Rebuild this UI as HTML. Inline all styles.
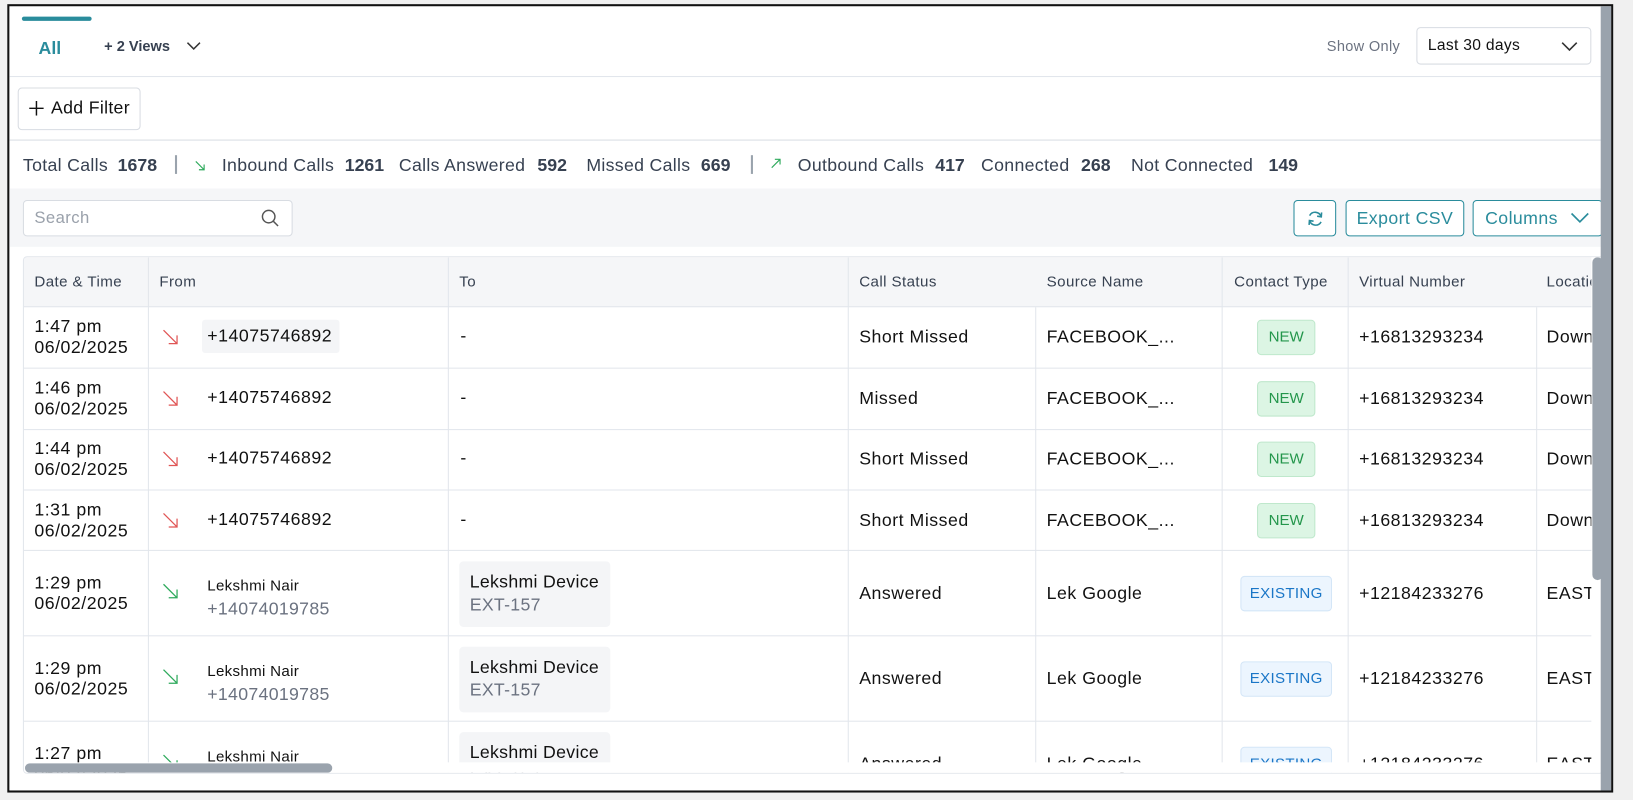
<!DOCTYPE html>
<html><head><meta charset="utf-8"><style>
*{box-sizing:border-box;margin:0;padding:0}
body{width:1633px;height:800px;background:#f0f0f0;font-family:"Liberation Sans",sans-serif;color:#111;position:relative;overflow:hidden}
#wrap{position:absolute;left:0;top:0;width:1568px;height:768px;transform:scale(1.04145);transform-origin:0 0}
.a{position:absolute;white-space:nowrap}
#frame{position:absolute;left:7px;top:4px;width:1542px;height:757px;border:2px solid #111;background:#fff;overflow:hidden}
.f16{font-size:17px;letter-spacing:0.5px}
.gray{color:#374151}
.b{font-weight:bold;color:#374151}
.btn{position:absolute;border:1px solid #2a8c9c;border-radius:4px;color:#2a8c9c;font-size:17px;letter-spacing:0.4px;display:flex;align-items:center;justify-content:center;background:#fff}
.hd{font-size:14.5px;color:#374151;letter-spacing:0.4px}
.vl{position:absolute;width:1px;background:#e2e6ec}
.hl{position:absolute;height:1px;background:#e2e6ec}
.new{position:absolute;width:56px;height:34px;border:1px solid #bfe8cc;background:#dcf5e4;color:#23964b;border-radius:4px;font-size:14.5px;display:flex;align-items:center;justify-content:center}
.ex{position:absolute;width:88px;height:34px;border:1px solid #d4e6f7;background:#ecf5fe;color:#1a76c7;border-radius:4px;font-size:14.5px;letter-spacing:0.3px;display:flex;align-items:center;justify-content:center}
.dev{position:absolute;width:145px;height:63px;background:#f4f5f7;border-radius:4px;padding:9px 10px;font-size:17px;line-height:22px;letter-spacing:0.3px}
.st{position:absolute;top:143px;font-size:17px;color:#374151;white-space:nowrap;letter-spacing:0.3px}
.sb{position:absolute;top:143px;font-size:17px;font-weight:bold;color:#374151;white-space:nowrap}
</style></head><body>
<div id="wrap">
<div id="frame">
<div style="position:absolute;left:12px;top:10px;width:67px;height:4px;background:#2a8c9c;border-radius:3px"></div>
<div class="a" style="left:28px;top:31px;font-size:17px;font-weight:bold;color:#2a8c9c">All</div>
<div class="a" style="left:91px;top:30px;font-size:14px;font-weight:bold;color:#374151">+ 2 Views</div>
<svg class="a" style="left:170px;top:33px" width="14" height="10"><path d="M1 2 L7 8 L13 2" fill="none" stroke="#333" stroke-width="1.4"/></svg>
<div class="a" style="left:1265px;top:30px;font-size:14px;color:#6b7280;letter-spacing:0.3px">Show Only</div>
<div style="position:absolute;left:1351px;top:20px;width:168px;height:36px;border:1px solid #d8dce2;border-radius:4px"></div>
<div class="a" style="left:1362px;top:29px;font-size:15px;letter-spacing:0.3px">Last 30 days</div>
<svg class="a" style="left:1490px;top:34px" width="16" height="10"><path d="M1 1 L8 8 L15 1" fill="none" stroke="#333" stroke-width="1.5"/></svg>
<div class="hl" style="left:0;top:67px;width:1530px"></div>
<div style="position:absolute;left:8px;top:78px;width:118px;height:41px;border:1px solid #d8dce2;border-radius:4px"></div>
<svg class="a" style="left:19px;top:91px" width="14" height="14"><path d="M7 0 V14 M0 7 H14" stroke="#111" stroke-width="1.4"/></svg>
<div class="a" style="left:40px;top:88px;font-size:17px;letter-spacing:0.3px">Add Filter</div>
<div class="hl" style="left:0;top:128px;width:1530px;background:#d8dde4"></div>
<div class="st" style="left:13px">Total Calls</div><div class="sb" style="left:104px">1678</div>
<div style="position:absolute;left:159px;top:143px;width:2px;height:18px;background:#9aa3ad"></div>
<svg class="a" style="left:178px;top:148px" width="10" height="10"><path d="M1 1 L9 9 M4 9 H9 V4" fill="none" stroke="#2eaa5c" stroke-width="1.1"/></svg>
<div class="st" style="left:204px">Inbound Calls</div><div class="sb" style="left:322px">1261</div>
<div class="st" style="left:374px">Calls Answered</div><div class="sb" style="left:507px">592</div>
<div class="st" style="left:554px">Missed Calls</div><div class="sb" style="left:664px">669</div>
<div style="position:absolute;left:712px;top:143px;width:2px;height:18px;background:#9aa3ad"></div>
<svg class="a" style="left:731px;top:146px" width="10" height="10"><path d="M1 9 L9 1 M4 1 H9 V6" fill="none" stroke="#2eaa5c" stroke-width="1.1"/></svg>
<div class="st" style="left:757px">Outbound Calls</div><div class="sb" style="left:889px">417</div>
<div class="st" style="left:933px">Connected</div><div class="sb" style="left:1029px">268</div>
<div class="st" style="left:1077px">Not Connected</div><div class="sb" style="left:1209px">149</div>
<div style="position:absolute;left:0;top:175px;width:1530px;height:56px;background:#f5f6f8"></div>
<div style="position:absolute;left:13px;top:186px;width:259px;height:35px;border:1px solid #d8dce2;border-radius:4px;background:#fff"></div>
<div class="a" style="left:24px;top:195px;font-size:16px;color:#9aa1ab;letter-spacing:0.4px">Search</div>
<svg class="a" style="left:241px;top:194px" width="20" height="20"><circle cx="8" cy="8" r="6" fill="none" stroke="#555" stroke-width="1.4"/><path d="M12.5 12.5 L17 17" stroke="#555" stroke-width="1.4"/></svg>
<div class="btn" style="left:1233px;top:186px;width:41px;height:35px"><svg width="18" height="18" viewBox="0 0 18 18"><path d="M14.5 7 A6 6 0 0 0 3.5 6 M3.5 11 A6 6 0 0 0 14.5 12" fill="none" stroke="#2a8c9c" stroke-width="1.5"/><path d="M15 3 L14.7 7.2 L10.7 6.6 M3 15 L3.3 10.8 L7.3 11.4" fill="none" stroke="#2a8c9c" stroke-width="1.5"/></svg></div>
<div class="btn" style="left:1283px;top:186px;width:114px;height:35px">Export CSV</div>
<div class="btn" style="left:1405px;top:186px;width:125px;height:35px;justify-content:flex-start;padding-left:11px">Columns<svg style="margin-left:12px" width="18" height="11"><path d="M1 1 L9 9 L17 1" fill="none" stroke="#2a8c9c" stroke-width="1.6"/></svg></div>

<!-- table -->
<div style="position:absolute;left:13px;top:240px;width:1518px;height:497px;border:1px solid #e2e6ec;border-radius:4px;overflow:hidden">
<div style="position:absolute;left:0;top:0;width:1518px;height:507px;overflow:hidden">
<div style="position:absolute;left:0;top:0;width:1520px;height:48px;background:#f5f6f8;border-bottom:1px solid #e2e6ec"></div>
<div class="a hd" style="left:10px;top:16px">Date &amp; Time</div>
<div class="a hd" style="left:130px;top:16px">From</div>
<div class="a hd" style="left:418px;top:16px">To</div>
<div class="a hd" style="left:802px;top:16px">Call Status</div>
<div class="a hd" style="left:982px;top:16px">Source Name</div>
<div class="a hd" style="left:1162px;top:16px">Contact Type</div>
<div class="a hd" style="left:1282px;top:16px">Virtual Number</div>
<div class="a hd" style="left:1462px;top:16px">Location</div>
<div class="vl" style="left:119px;top:0;height:500px"></div>
<div class="vl" style="left:407px;top:0;height:500px"></div>
<div class="vl" style="left:791px;top:0;height:500px"></div>
<div class="vl" style="left:971px;top:48px;height:500px"></div>
<div class="vl" style="left:1150px;top:0;height:500px"></div>
<div class="vl" style="left:1271px;top:0;height:500px"></div>
<div class="vl" style="left:1452px;top:48px;height:500px"></div>
<div class="hl" style="left:0;top:106px;width:1506px"></div>
<div class="hl" style="left:0;top:165px;width:1506px"></div>
<div class="hl" style="left:0;top:223px;width:1506px"></div>
<div class="hl" style="left:0;top:281px;width:1506px"></div>
<div class="hl" style="left:0;top:363px;width:1506px"></div>
<div class="hl" style="left:0;top:445px;width:1506px"></div>

<!-- rows 1-4 -->
<div style="position:absolute;left:171px;top:60px;width:132px;height:32px;background:#f4f5f7;border-radius:3px"></div>
<div class="a f16" style="left:10px;top:57px;line-height:20px">1:47 pm<br>06/02/2025</div>
<div class="a f16" style="left:10px;top:116px;line-height:20px">1:46 pm<br>06/02/2025</div>
<div class="a f16" style="left:10px;top:174px;line-height:20px">1:44 pm<br>06/02/2025</div>
<div class="a f16" style="left:10px;top:233px;line-height:20px">1:31 pm<br>06/02/2025</div>
<svg class="a" style="left:133px;top:69px" width="16" height="16"><path d="M1 1 L14 14 M6 14 H14 V6" fill="none" stroke="#e05555" stroke-width="1.2"/></svg>
<svg class="a" style="left:133px;top:128px" width="16" height="16"><path d="M1 1 L14 14 M6 14 H14 V6" fill="none" stroke="#e05555" stroke-width="1.2"/></svg>
<svg class="a" style="left:133px;top:186px" width="16" height="16"><path d="M1 1 L14 14 M6 14 H14 V6" fill="none" stroke="#e05555" stroke-width="1.2"/></svg>
<svg class="a" style="left:133px;top:245px" width="16" height="16"><path d="M1 1 L14 14 M6 14 H14 V6" fill="none" stroke="#e05555" stroke-width="1.2"/></svg>
<div class="a f16" style="left:176px;top:66px">+14075746892</div>
<div class="a f16" style="left:176px;top:125px">+14075746892</div>
<div class="a f16" style="left:176px;top:183px">+14075746892</div>
<div class="a f16" style="left:176px;top:242px">+14075746892</div>
<div class="a f16" style="left:419px;top:66px">-</div>
<div class="a f16" style="left:419px;top:125px">-</div>
<div class="a f16" style="left:419px;top:183px">-</div>
<div class="a f16" style="left:419px;top:242px">-</div>
<div class="a f16" style="left:802px;top:67px">Short Missed</div>
<div class="a f16" style="left:802px;top:126px">Missed</div>
<div class="a f16" style="left:802px;top:184px">Short Missed</div>
<div class="a f16" style="left:802px;top:243px">Short Missed</div>
<div class="a f16" style="left:982px;top:67px">FACEBOOK_...</div>
<div class="a f16" style="left:982px;top:126px">FACEBOOK_...</div>
<div class="a f16" style="left:982px;top:184px">FACEBOOK_...</div>
<div class="a f16" style="left:982px;top:243px">FACEBOOK_...</div>
<div class="new" style="left:1184px;top:60px">NEW</div>
<div class="new" style="left:1184px;top:119px">NEW</div>
<div class="new" style="left:1184px;top:177px">NEW</div>
<div class="new" style="left:1184px;top:236px">NEW</div>
<div class="a f16" style="left:1282px;top:67px">+16813293234</div>
<div class="a f16" style="left:1282px;top:126px">+16813293234</div>
<div class="a f16" style="left:1282px;top:184px">+16813293234</div>
<div class="a f16" style="left:1282px;top:243px">+16813293234</div>
<div class="a f16" style="left:1462px;top:67px">Downtown</div>
<div class="a f16" style="left:1462px;top:126px">Downtown</div>
<div class="a f16" style="left:1462px;top:184px">Downtown</div>
<div class="a f16" style="left:1462px;top:243px">Downtown</div>

<!-- rows 5-7 -->
<div class="a f16" style="left:10px;top:303px;line-height:20px">1:29 pm<br>06/02/2025</div>
<div class="a f16" style="left:10px;top:385px;line-height:20px">1:29 pm<br>06/02/2025</div>
<div class="a f16" style="left:10px;top:467px;line-height:20px">1:27 pm<br>06/02/2025</div>
<svg class="a" style="left:133px;top:313px" width="16" height="16"><path d="M1 1 L14 14 M6 14 H14 V6" fill="none" stroke="#2eaa5c" stroke-width="1.2"/></svg>
<svg class="a" style="left:133px;top:395px" width="16" height="16"><path d="M1 1 L14 14 M6 14 H14 V6" fill="none" stroke="#2eaa5c" stroke-width="1.2"/></svg>
<svg class="a" style="left:133px;top:477px" width="16" height="16"><path d="M1 1 L14 14 M6 14 H14 V6" fill="none" stroke="#2eaa5c" stroke-width="1.2"/></svg>
<div class="a" style="left:176px;top:305px;font-size:14.5px;line-height:22px;letter-spacing:0.3px">Lekshmi Nair<br><span style="font-size:17px;color:#6b7280">+14074019785</span></div>
<div class="a" style="left:176px;top:387px;font-size:14.5px;line-height:22px;letter-spacing:0.3px">Lekshmi Nair<br><span style="font-size:17px;color:#6b7280">+14074019785</span></div>
<div class="a" style="left:176px;top:469px;font-size:14.5px;line-height:22px;letter-spacing:0.3px">Lekshmi Nair<br><span style="font-size:17px;color:#6b7280">+14074019785</span></div>
<div class="dev" style="left:418px;top:292px">Lekshmi Device<br><span style="color:#6b7280">EXT-157</span></div>
<div class="dev" style="left:418px;top:374px">Lekshmi Device<br><span style="color:#6b7280">EXT-157</span></div>
<div class="dev" style="left:418px;top:456px">Lekshmi Device<br><span style="color:#6b7280">EXT-157</span></div>
<div class="a f16" style="left:802px;top:313px">Answered</div>
<div class="a f16" style="left:802px;top:395px">Answered</div>
<div class="a f16" style="left:802px;top:477px">Answered</div>
<div class="a f16" style="left:982px;top:313px">Lek Google</div>
<div class="a f16" style="left:982px;top:395px">Lek Google</div>
<div class="a f16" style="left:982px;top:477px">Lek Google</div>
<div class="ex" style="left:1168px;top:306px">EXISTING</div>
<div class="ex" style="left:1168px;top:388px">EXISTING</div>
<div class="ex" style="left:1168px;top:470px">EXISTING</div>
<div class="a f16" style="left:1282px;top:313px">+12184233276</div>
<div class="a f16" style="left:1282px;top:395px">+12184233276</div>
<div class="a f16" style="left:1282px;top:477px">+12184233276</div>
<div class="a f16" style="left:1462px;top:313px">EAST</div>
<div class="a f16" style="left:1462px;top:395px">EAST</div>
<div class="a f16" style="left:1462px;top:477px">EAST</div>
</div>
<div style="position:absolute;left:1505px;top:0;width:15px;height:497px;background:#fff"></div>
<div style="position:absolute;left:1506px;top:0;width:10px;height:310px;background:#9aa3ad;border-radius:5px"></div>
<div style="position:absolute;left:0;top:485px;width:1506px;height:12px;background:#fff"></div>
<div style="position:absolute;left:1px;top:486px;width:295px;height:9px;background:#9aa3ad;border-radius:5px"></div>
</div>
<div style="position:absolute;left:1528px;top:0;width:12px;height:760px;background:#9aa3ad"></div>
</div>
</div>
</body></html>
